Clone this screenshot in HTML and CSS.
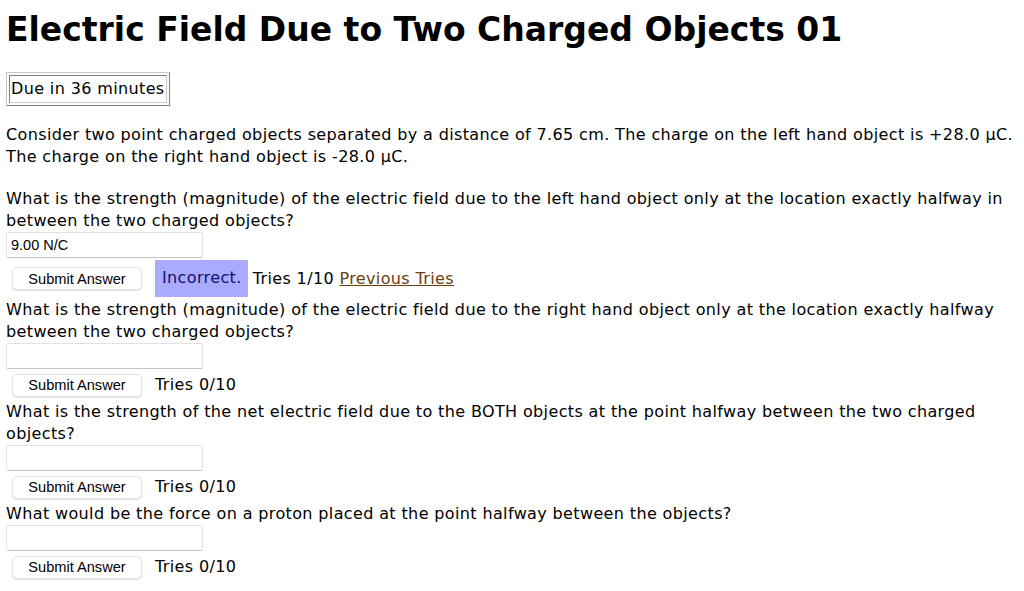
FILE: index.html
```html
<!DOCTYPE html>
<html>
<head>
<meta charset="utf-8">
<link rel="stylesheet" href="styles.css">
</head>
<body>
<h1 class="title">Electric Field Due to Two Charged Objects 01</h1>
<table class="due" border="1"><tr><td>Due in 36 minutes</td></tr></table>
<p class="intro">Consider two point charged objects separated by a distance of 7.65 cm. The charge on the left hand object is +28.0 μC. The charge on the right hand object is -28.0 μC.</p>

<div class="q">
  <p class="qtext">What is the strength (magnitude) of the electric field due to the left hand object only at the location exactly halfway in between the two charged objects?</p>
  <input class="ans" type="text" value="9.00 N/C">
  <div class="row">
    <button class="submit">Submit Answer</button>
    <span class="incorrect">Incorrect.</span>
    <span class="tries">Tries 1/10 <a href="#" class="prev">Previous Tries</a></span>
  </div>
</div>

<div class="q">
  <p class="qtext">What is the strength (magnitude) of the electric field due to the right hand object only at the location exactly halfway between the two charged objects?</p>
  <input class="ans" type="text">
  <div class="row">
    <button class="submit">Submit Answer</button>
    <span class="tries">Tries 0/10</span>
  </div>
</div>

<div class="q">
  <p class="qtext">What is the strength of the net electric field due to the BOTH objects at the point halfway between the two charged objects?</p>
  <input class="ans" type="text">
  <div class="row">
    <button class="submit">Submit Answer</button>
    <span class="tries">Tries 0/10</span>
  </div>
</div>

<div class="q">
  <p class="qtext">What would be the force on a proton placed at the point halfway between the objects?</p>
  <input class="ans" type="text">
  <div class="row">
    <button class="submit">Submit Answer</button>
    <span class="tries">Tries 0/10</span>
  </div>
</div>
</body>
</html>
```

FILE: styles.css
```css
html, body {
  margin: 0;
  padding: 0;
  background: #ffffff;
}
body {
  padding: 0 6px;
  font-family: "DejaVu Sans", Verdana, sans-serif;
  font-size: 16px;
  line-height: 22px;
  letter-spacing: 0.37px;
  color: #000;
}
.title {
  font-size: 33px;
  line-height: 38px;
  font-weight: bold;
  letter-spacing: 0;
  margin: 11px 0 23px 0;
}
.due {
  border-collapse: separate;
  border-spacing: 2px;
  border: 1px solid;
  border-color: #c8c8c8 #808080 #808080 #c8c8c8;
  margin: 0 0 18px 0;
}
.due td {
  border: 1px solid;
  border-color: #808080 #c8c8c8 #c8c8c8 #808080;
  padding: 1px 1px 1px 1px;
  line-height: 24px;
}
.intro {
  margin: 0 0 20px 0;
}
.qtext {
  margin: 0;
}
.ans {
  display: block;
  box-sizing: border-box;
  width: 197px;
  height: 26px;
  margin: 0;
  padding: 0 4px;
  border: 1px solid #e2e2e2;
  border-bottom-color: #c4c4c4;
  border-radius: 2px;
  font-family: "Liberation Sans", Arial, sans-serif;
  font-size: 14.5px;
  letter-spacing: 0;
  color: #000;
  background: #fff;
}
.row {
  display: flex;
  align-items: center;
  min-height: 32px;
}
.submit {
  box-sizing: border-box;
  width: 130px;
  height: 23px;
  margin: 0 13px 0 6px;
  padding: 0;
  border: 1px solid #e4e4e4;
  border-radius: 5px;
  background: #fff;
  box-shadow: 0 1px 1px rgba(0,0,0,0.12);
  font-family: "Liberation Sans", Arial, sans-serif;
  font-size: 14.6px;
  letter-spacing: 0;
  color: #000;
}
.incorrect {
  background: #aaaaff;
  color: #10106e;
  padding: 7px 6px 8px 7px;
  margin: 2px 5px 2px 0;
}
.tries {
  white-space: nowrap;
}
.prev {
  color: #6b3d0f;
  text-decoration: underline;
}
```
